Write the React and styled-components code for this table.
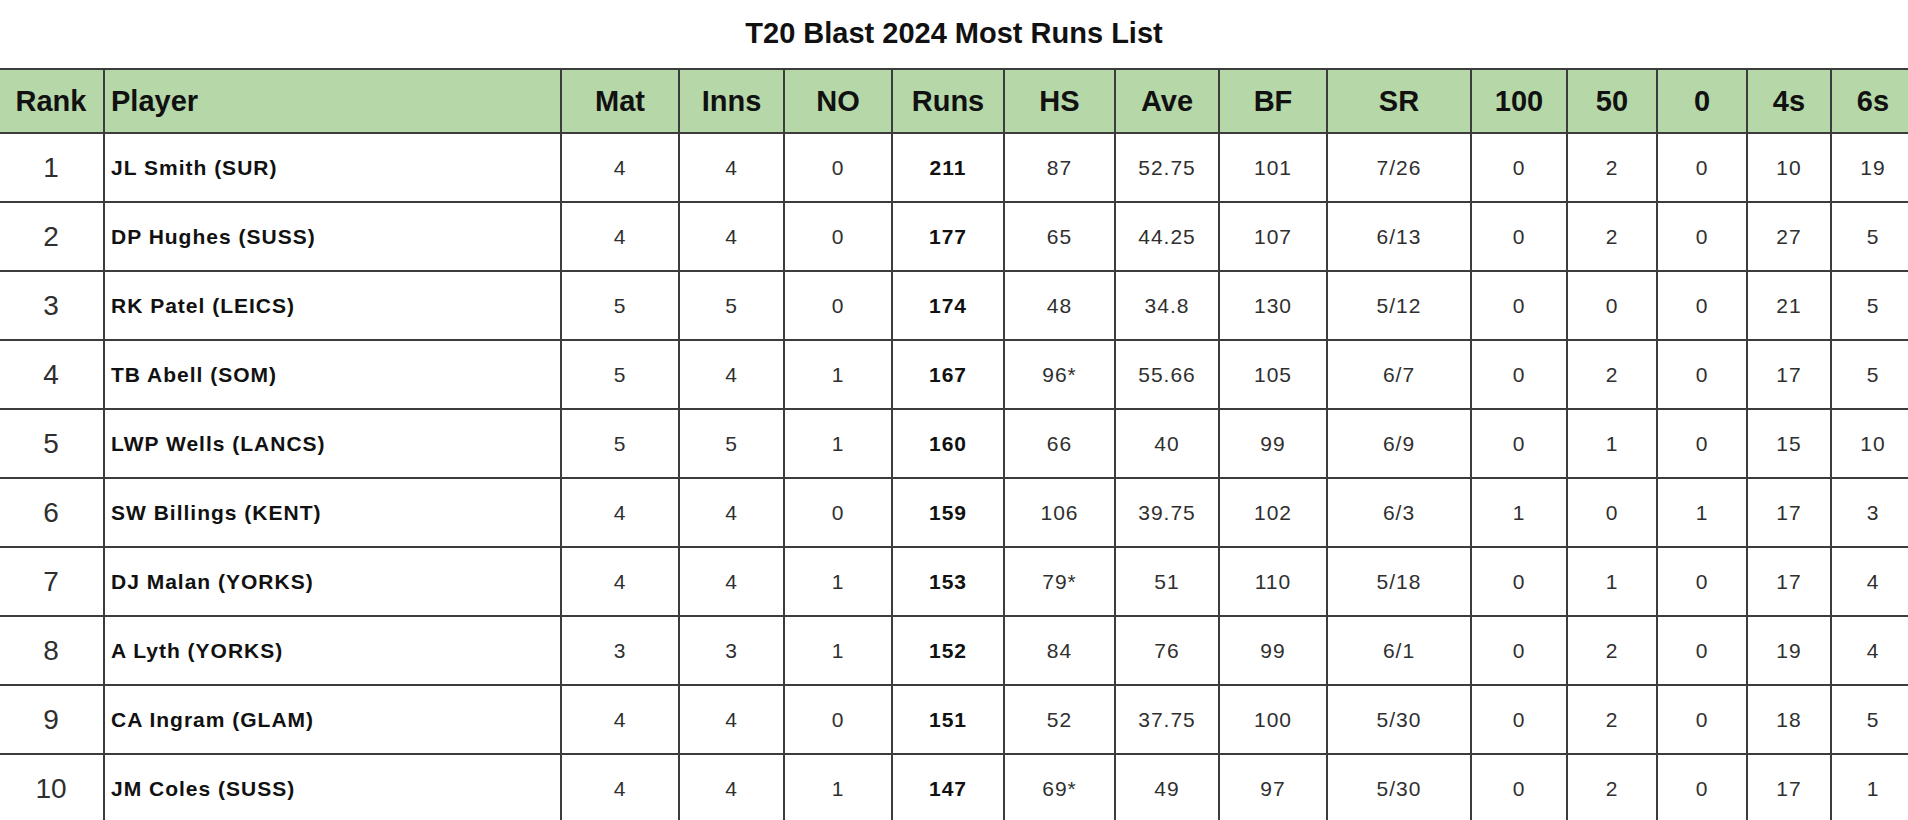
import styled, { createGlobalStyle } from "styled-components";

const columns = [
  { key: "rank", label: "Rank", width: 106 },
  { key: "player", label: "Player", width: 457, align: "left" },
  { key: "mat", label: "Mat", width: 118 },
  { key: "inns", label: "Inns", width: 105 },
  { key: "no", label: "NO", width: 108 },
  { key: "runs", label: "Runs", width: 112 },
  { key: "hs", label: "HS", width: 111 },
  { key: "ave", label: "Ave", width: 104 },
  { key: "bf", label: "BF", width: 108 },
  { key: "sr", label: "SR", width: 144 },
  { key: "hundreds", label: "100", width: 96 },
  { key: "fifties", label: "50", width: 90 },
  { key: "ducks", label: "0", width: 90 },
  { key: "fours", label: "4s", width: 84 },
  { key: "sixes", label: "6s", width: 84 },
];

const players = [
  [1, "JL Smith (SUR)", 4, 4, 0, 211, "87", "52.75", 101, "7/26", 0, 2, 0, 10, 19],
  [2, "DP Hughes (SUSS)", 4, 4, 0, 177, "65", "44.25", 107, "6/13", 0, 2, 0, 27, 5],
  [3, "RK Patel (LEICS)", 5, 5, 0, 174, "48", "34.8", 130, "5/12", 0, 0, 0, 21, 5],
  [4, "TB Abell (SOM)", 5, 4, 1, 167, "96*", "55.66", 105, "6/7", 0, 2, 0, 17, 5],
  [5, "LWP Wells (LANCS)", 5, 5, 1, 160, "66", "40", 99, "6/9", 0, 1, 0, 15, 10],
  [6, "SW Billings (KENT)", 4, 4, 0, 159, "106", "39.75", 102, "6/3", 1, 0, 1, 17, 3],
  [7, "DJ Malan (YORKS)", 4, 4, 1, 153, "79*", "51", 110, "5/18", 0, 1, 0, 17, 4],
  [8, "A Lyth (YORKS)", 3, 3, 1, 152, "84", "76", 99, "6/1", 0, 2, 0, 19, 4],
  [9, "CA Ingram (GLAM)", 4, 4, 0, 151, "52", "37.75", 100, "5/30", 0, 2, 0, 18, 5],
  [10, "JM Coles (SUSS)", 4, 4, 1, 147, "69*", "49", 97, "5/30", 0, 2, 0, 17, 1],
];

const GlobalStyle = createGlobalStyle`
  body {
    margin: 0;
    background: #ffffff;
    overflow: hidden;
    font-family: "Liberation Sans", Arial, sans-serif;
  }
`;

const Page = styled.div`
  width: 1908px;
  height: 820px;
  overflow: hidden;
  background: #fff;
`;

const Title = styled.h1`
  margin: 0;
  height: 68px;
  display: flex;
  align-items: center;
  justify-content: center;
  font-size: 29px;
  font-weight: 700;
  color: #111;
  padding-bottom: 2px;
  box-sizing: border-box;
`;

const Table = styled.table`
  width: 1917px;
  margin-left: -3px;
  table-layout: fixed;
  border-collapse: collapse;
`;

const HeadRow = styled.tr`
  height: 64px;
  background: #b6d7a8;
`;

const HeadCell = styled.th`
  border: 2px solid #3c3c3c;
  padding: 0 6px;
  font-size: 29px;
  font-weight: 700;
  color: #111;
  text-align: ${(p) => p.$align || "center"};
  white-space: nowrap;
`;

const Row = styled.tr`
  height: 69px;
`;

const Cell = styled.td`
  border: 2px solid #3c3c3c;
  padding: 0 6px;
  font-size: ${(p) => (p.$rank ? "28px" : "21px")};
  letter-spacing: ${(p) => (p.$rank ? "0" : "1px")};
  font-weight: ${(p) => (p.$bold ? 700 : 400)};
  color: ${(p) => (p.$bold ? "#111" : "#2f2f2f")};
  text-align: ${(p) => p.$align || "center"};
  white-space: nowrap;
`;

export default function App() {
  return (
    <Page>
      <GlobalStyle />
      <Title>T20 Blast 2024 Most Runs List</Title>
      <Table>
        <colgroup>
          {columns.map((col) => (
            <col key={col.key} style={{ width: col.width }} />
          ))}
        </colgroup>
        <thead>
          <HeadRow>
            {columns.map((col) => (
              <HeadCell key={col.key} $align={col.align}>
                {col.label}
              </HeadCell>
            ))}
          </HeadRow>
        </thead>
        <tbody>
          {players.map((row) => (
            <Row key={row[0]}>
              {row.map((value, i) => (
                <Cell
                  key={columns[i].key}
                  $align={columns[i].align}
                  $rank={i === 0}
                  $bold={i === 1 || i === 5}
                >
                  {value}
                </Cell>
              ))}
            </Row>
          ))}
        </tbody>
      </Table>
    </Page>
  );
}
